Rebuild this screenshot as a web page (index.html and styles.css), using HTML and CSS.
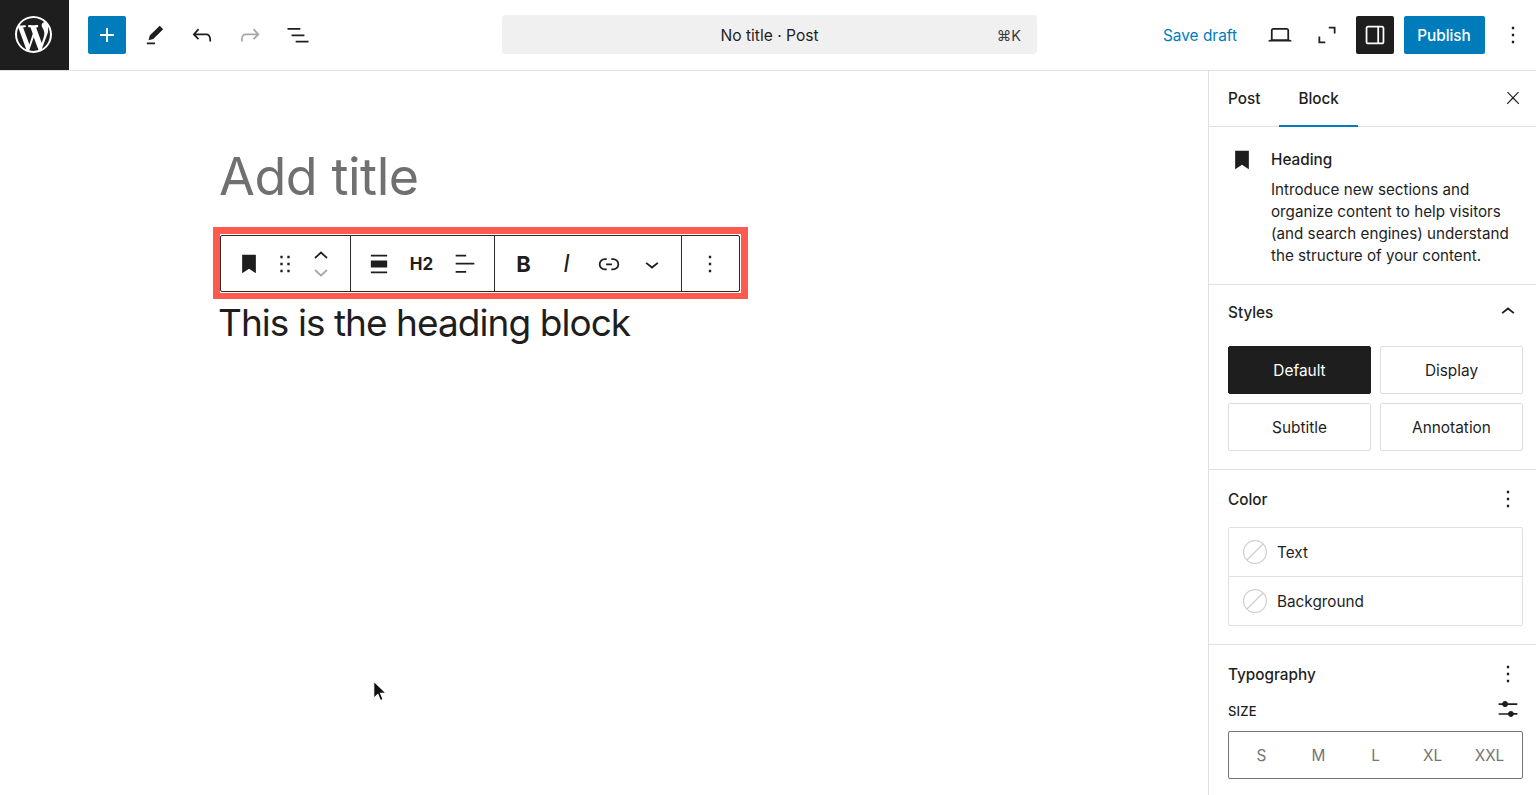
FILE: index.html
```html
<!DOCTYPE html>
<html lang="en">
<head>
<meta charset="utf-8">
<title>Edit Post</title>
<link rel="stylesheet" href="styles.css">
</head>
<body>
<header class="topbar">
  <div class="topbar-left">
    <a class="wp-logo"><svg viewBox="0 0 20 20" class="wp-svg"><path d="M20 10c0-5.51-4.49-10-10-10C4.48 0 0 4.49 0 10c0 5.52 4.48 10 10 10 5.51 0 10-4.48 10-10zM7.78 15.37L4.37 6.22c.55-.02 1.17-.08 1.17-.08.5-.06.44-1.13-.06-1.11 0 0-1.45.11-2.37.11-.18 0-.37 0-.58-.01C4.12 2.69 6.87 1.11 10 1.11c2.33 0 4.45.87 6.05 2.34-.68-.11-1.65.39-1.65 1.58 0 .74.45 1.36.9 2.1.35.61.55 1.36.55 2.46 0 1.49-1.4 5-1.4 5l-3.03-8.37c.54-.02.82-.17.82-.17.5-.05.44-1.25-.06-1.22 0 0-1.44.12-2.38.12-.87 0-2.33-.12-2.33-.12-.5-.03-.56 1.2-.06 1.22l.92.08 1.26 3.41zM17.41 10c.24-.64.74-1.87.43-4.25.7 1.29 1.05 2.71 1.05 4.25 0 3.29-1.73 6.24-4.4 7.78.97-2.59 1.94-5.2 2.92-7.78zM6.1 18.09C3.12 16.65 1.11 13.53 1.11 10c0-1.3.23-2.48.72-3.59C3.25 10.3 4.67 14.2 6.1 18.09zm4.03-6.63l2.58 6.98c-.86.29-1.76.45-2.71.45-.79 0-1.57-.11-2.29-.33.81-2.38 1.62-4.74 2.42-7.1z"/></svg></a>
    <div class="tools">
      <button class="square blue"><svg class="ic" viewBox="0 0 24 24"><path d="M18 11.2h-5.2V6h-1.6v5.2H6v1.6h5.2V18h1.6v-5.2H18z"/></svg></button>
      <button class="tool"><svg class="ic" viewBox="0 0 24 24"><path d="m19 7-3-3-8.5 8.5-1 4 4-1L19 7Zm-7 11.5H5V20h7v-1.5Z"/></svg></button>
      <button class="tool"><svg class="ic" viewBox="0 0 24 24"><path d="M18.3 11.7c-.6-.6-1.4-.9-2.3-.9H6.7l2.9-3.3-1.1-1-4.5 5L8.5 16l1-1-2.7-2.7H16c.5 0 .9.2 1.3.5 1 1 1 3.4 1 4.5v.3h1.5v-.2c0-1.5 0-4.3-1.5-5.7z"/></svg></button>
      <button class="tool dim"><svg class="ic" viewBox="0 0 24 24"><path d="M15.6 6.5l-1.1 1 2.9 3.3H8c-.9 0-1.7.3-2.3.9-1.4 1.5-1.4 4.2-1.4 5.6v.2h1.5v-.3c0-1.1 0-3.5 1-4.5.3-.3.7-.5 1.3-.5h9.2L14.5 15l1.1 1.1 4.6-4.6-4.6-5z"/></svg></button>
      <button class="tool"><svg class="ic" viewBox="0 0 24 24"><path d="M3 6h11v1.5H3V6Zm3.5 5.5h11V13h-11v-1.5ZM21 17H10v1.5h11V17Z"/></svg></button>
    </div>
  </div>
  <div class="command"><span class="command-title">No title · Post</span><span class="shortcut">⌘K</span></div>
  <div class="topbar-right">
    <a class="save">Save draft</a>
    <button class="tool laptop"><svg class="ic" viewBox="0 0 24 24"><path d="M20.5 16h-.7V8c0-1.1-.9-2-2-2H6.2c-1.1 0-2 .9-2 2v8h-.7c-.8 0-1.5.7-1.5 1.5h20c0-.8-.7-1.5-1.5-1.5zM5.7 8c0-.3.2-.5.5-.5h11.6c.3 0 .5.2.5.5v7.6H5.7V8z"/></svg></button>
    <button class="tool"><svg class="ic" viewBox="0 0 24 24"><path d="M13.5 5H19.3v5.8h-1.5V6.5h-4.3V5ZM4.7 13.2h1.5v4.3h4.3V19H4.7v-5.8Z"/></svg></button>
    <button class="square dark"><svg class="ic" viewBox="0 0 24 24"><path d="M18 4H6c-1.1 0-2 .9-2 2v12c0 1.1.9 2 2 2h12c1.1 0 2-.9 2-2V6c0-1.1-.9-2-2-2zm-4 14.5H6c-.3 0-.5-.2-.5-.5V6c0-.3.2-.5.5-.5h8v13zm4.5-.5c0 .3-.2.5-.5.5h-2.5v-13H18c.3 0 .5.2.5.5v12z"/></svg></button>
    <button class="publish">Publish</button>
    <button class="tool more"><svg class="ic" viewBox="0 0 24 24"><path d="M13 19h-2v-2h2v2zm0-6h-2v-2h2v2zm0-6h-2V5h2v2z"/></svg></button>
  </div>
</header>
<div class="workspace">
  <main class="editor">
    <h1 class="post-title">Add title</h1>
    <div class="highlight">
      <div class="block-toolbar">
        <div class="group g1">
          <span class="tb"><svg class="ic" viewBox="0 0 24 24"><path d="M6.125 4h11.75v16L12 16l-5.875 4z"/></svg></span>
          <span class="tb"><svg class="ic" viewBox="0 0 24 24"><path d="M8 7h2V5H8v2zm0 6h2v-2H8v2zm0 6h2v-2H8v2zm6-14v2h2V5h-2zm0 8h2v-2h-2v2zm0 6h2v-2h-2v2z"/></svg></span>
          <span class="mover">
            <svg class="chev" viewBox="0 0 16 10"><path d="M2 8l6-5.5L14 8" /></svg>
            <svg class="chev dimline" viewBox="0 0 16 10"><path d="M2 2l6 5.5L14 2" /></svg>
          </span>
        </div>
        <div class="group g2">
          <span class="tb"><svg class="ic" viewBox="0 0 24 24"><path d="M19 5.5H5V4h14v1.5ZM19 20H5v-1.5h14V20ZM5 9h14v6H5V9Z"/></svg></span>
          <span class="tb h2">H2</span>
          <span class="tb"><svg class="ic" viewBox="0 0 24 24"><path d="M13 5.5H4V4h9v1.5Zm7 7H4V11h16v1.5Zm-7 7H4V18h9v1.5Z"/></svg></span>
        </div>
        <div class="group g3">
          <span class="tb bold">B</span>
          <span class="tb italic">I</span>
          <span class="tb tb-link"><svg class="ic" viewBox="0 0 24 24"><path d="M10 17.389H8.444A5.194 5.194 0 1 1 8.444 7H10v1.5H8.444a3.694 3.694 0 0 0 0 7.389H10v1.5ZM14 7h1.556a5.194 5.194 0 0 1 0 10.39H14v-1.5h1.556a3.694 3.694 0 0 0 0-7.39H14V7Zm-4.5 6h5v-1.5h-5V13Z"/></svg></span>
          <span class="tb"><svg class="ic" viewBox="0 0 24 24"><path d="M17.5 11.6 12 16l-5.5-4.4.9-1.2L12 14l4.5-3.6 1 1.2z"/></svg></span>
        </div>
        <div class="group g4">
          <span class="tb"><svg class="ic" viewBox="0 0 24 24"><path d="M13 19h-2v-2h2v2zm0-6h-2v-2h2v2zm0-6h-2V5h2v2z"/></svg></span>
        </div>
      </div>
    </div>
    <h2 class="heading">This is the heading block</h2>
  </main>
  <aside class="sidebar">
    <div class="tabs">
      <span class="tab">Post</span>
      <span class="tab active">Block</span>
      <button class="tool close"><svg class="ic" viewBox="0 0 24 24"><path d="M13 11.8l6.1-6.3-1-1-6.1 6.2-6.1-6.2-1 1 6.1 6.3-6.5 6.7 1 1 6.5-6.6 6.5 6.6 1-1z"/></svg></button>
    </div>
    <section class="card">
      <svg class="card-icon" viewBox="0 0 24 24"><path d="M6.125 4h11.75v16L12 16l-5.875 4z"/></svg>
      <div class="card-body">
        <div class="card-title">Heading</div>
        <p class="card-desc">Introduce new sections and organize content to help visitors (and search engines) understand the structure of your content.</p>
      </div>
    </section>
    <section class="panel styles-panel">
      <div class="panel-head"><span>Styles</span><svg class="ic" viewBox="0 0 24 24"><path d="M6.5 12.4 12 8l5.5 4.4-.9 1.2L12 10l-4.5 3.6-1.1-1.2z"/></svg></div>
      <div class="style-grid">
        <button class="style active">Default</button>
        <button class="style">Display</button>
        <button class="style">Subtitle</button>
        <button class="style">Annotation</button>
      </div>
    </section>
    <section class="panel color-panel">
      <div class="panel-head"><span>Color</span><svg class="ic" viewBox="0 0 24 24"><path d="M13 19h-2v-2h2v2zm0-6h-2v-2h2v2zm0-6h-2V5h2v2z"/></svg></div>
      <div class="color-list">
        <div class="color-row"><svg class="swatch" viewBox="0 0 24 24"><circle cx="12" cy="12" r="11.4"/><path d="M4 20 20 4"/></svg>Text</div>
        <div class="color-row"><svg class="swatch" viewBox="0 0 24 24"><circle cx="12" cy="12" r="11.4"/><path d="M4 20 20 4"/></svg>Background</div>
      </div>
    </section>
    <section class="panel type-panel">
      <div class="panel-head"><span>Typography</span><svg class="ic" viewBox="0 0 24 24"><path d="M13 19h-2v-2h2v2zm0-6h-2v-2h2v2zm0-6h-2V5h2v2z"/></svg></div>
      <div class="size-head"><span>SIZE</span><svg class="ic" viewBox="0 0 24 24"><path d="M14.5 13.8c-1.1 0-2.1.7-2.4 1.8H4V17h8.1c.3 1 1.3 1.8 2.4 1.8s2.1-.7 2.4-1.8H20v-1.5h-3.1c-.3-1-1.3-1.7-2.4-1.7zM11.9 7c-.3-1-1.3-1.8-2.4-1.8S7.4 6 7.1 7H4v1.5h3.1c.3 1 1.3 1.8 2.4 1.8s2.1-.7 2.4-1.8H20V7h-8.1z"/></svg></div>
      <div class="sizes"><span>S</span><span>M</span><span>L</span><span>XL</span><span>XXL</span></div>
    </section>
  </aside>
</div>
<svg class="cursor" viewBox="0 0 14 20"><path d="M1.5 1v15l3.6-3.4 2.3 5.4 2.4-1-2.3-5.3h5z" fill="#111" stroke="#fff" stroke-width="1"/></svg>
</body>
</html>
```
FILE: styles.css
```css
* { box-sizing: border-box; }
html, body { margin: 0; height: 795px; overflow: hidden; background: #fff; }
body { font-family: Inter, "Liberation Sans", sans-serif; color: #1e1e1e; font-size: 15.3px; position: relative; }
button { font: inherit; color: inherit; border: 0; background: none; padding: 0; display: flex; align-items: center; justify-content: center; }
.ic { width: 28px; height: 28px; fill: currentColor; display: block; flex: none; }

.topbar { height: 71px; display: flex; align-items: center; justify-content: space-between; border-bottom: 1px solid #e0e0e0; padding-bottom: 1px; position: relative; }
.topbar-left { display: flex; align-items: center; height: 100%; }
.wp-logo { width: 69px; height: 70px; margin-bottom: -1px; background: #1e1e1e; display: flex; align-items: center; justify-content: center; padding: 0 2px 2px 0; }
.wp-svg { width: 37px; height: 37px; fill: #fff; }
.tools { display: flex; align-items: center; margin-left: 19px; gap: 9.7px; }
.square { width: 38px; height: 38px; border-radius: 2px; color: #fff; }
.blue { background: #007cba; }
.dark { background: #1e1e1e; }
.tool { width: 38px; height: 38px; }
.dim { color: #a7a7a7; }
.command { position: absolute; left: 502px; top: 15px; width: 535px; height: 39px; padding-top: 1px; background: #f0f0f0; border-radius: 4px; display: flex; align-items: center; justify-content: center; font-size: 15.6px; color: #1e1e1e; }
.shortcut { position: absolute; right: 16px; font-size: 14.5px; color: #3c3c3c; }
.topbar-right { display: flex; align-items: center; height: 100%; padding-right: 4px; }
.save { color: #007cba; font-size: 15.4px; margin-right: 24px; padding-top: 2px; }
.topbar-right .tool { margin-right: 10px; }
.topbar-right .laptop { margin-right: 9px; }
.publish { width: 81px; height: 38px; margin: 0 9px 0 10px; padding: 1px 1px 0 0; background: #007cba; color: #fff; border-radius: 2px; font-size: 15.3px; font-weight: 500; }
.topbar-right .more { margin: 0; }

.workspace { display: flex; height: 724px; }
.editor { flex: 1; padding: 77px 0 0 213px; min-width: 0; }
.post-title { margin: 0 0 0 6px; font-size: 52px; line-height: 58px; font-weight: 400; color: #707070; letter-spacing: -.45px; }
.highlight { width: 535px; height: 72px; margin-top: 21px; border: 7px solid #fe5a4e; border-bottom-width: 6px; padding: 1px 1px 1px 0; background: #fff; }
.block-toolbar { display: flex; height: 100%; border: 1px solid #2a2a2a; border-radius: 2px; }
.group { display: flex; align-items: center; border-right: 1px solid #2a2a2a; height: 100%; }
.g1 { width: 130px; padding-left: 10px; }
.g2 { width: 144px; padding-left: 6px; }
.g3 { width: 187px; padding-left: 7px; }
.g4 { flex: 1; border-right: 0; justify-content: center; padding-right: 2px; }
.tb { width: 43px; height: 100%; display: flex; align-items: center; justify-content: center; }
.tb-link { margin-left: -1px; }
.g1 .tb { width: 36px; }
.mover { width: 36px; display: flex; flex-direction: column; align-items: center; gap: 8px; }
.chev { width: 16px; height: 10px; fill: none; stroke: #1e1e1e; stroke-width: 1.7; }
.dimline { stroke: #a7a7a7; }
.h2 { font-size: 17px; font-weight: 700; }
.bold { font-size: 22px; font-weight: 700; }
.italic { font-size: 24px; font-style: italic; font-weight: 400; }
.heading { margin: -1px 0 0 5px; font-size: 37px; line-height: 50px; font-weight: 400; letter-spacing: -.95px; color: #1e1e1e; }

.sidebar { width: 328px; border-left: 1px solid #e0e0e0; flex: none; }
.tabs { height: 56px; display: flex; align-items: flex-start; padding-left: 19px; border-bottom: 1px solid #e0e0e0; position: relative; font-weight: 500; }
.tab { display: flex; align-items: center; height: 55px; }
.tab.active { margin-left: 19px; padding: 0 19px 1px; box-shadow: inset 0 -2px 0 #007cba; height: 56px; }
.close { position: absolute; right: 4px; top: 8px; }
.close .ic { width: 20px; height: 20px; }
.card { display: flex; padding: 20px 15px 0 19px; height: 158px; border-bottom: 1px solid #e0e0e0; }
.card-icon { width: 28px; height: 28px; fill: #1e1e1e; flex: none; margin: -1px 15px 0 0; }
.card-title { font-weight: 500; line-height: 26px; }
.card-desc { margin: 6px 0 0; font-size: 15.2px; line-height: 22px; }
.panel { padding: 0 13px 0 19px; border-bottom: 1px solid #e0e0e0; }
.panel-head { display: flex; align-items: center; justify-content: space-between; font-weight: 500; }
.panel-head .ic { margin-right: 1.5px; }
.styles-panel { height: 185px; padding-top: 13px; }
.style-grid { margin-top: 20px; display: grid; grid-template-columns: 143px 143px; gap: 9px 9px; }
.style { height: 48px; border: 1px solid #ddd; border-radius: 2px; font-size: 15.4px; }
.style.active { background: #1e1e1e; color: #fff; border-color: #1e1e1e; }
.color-panel { height: 175px; padding-top: 15px; }
.color-list { margin-top: 14px; border: 1px solid #e0e0e0; border-radius: 2px; }
.color-row { height: 48px; display: flex; align-items: center; padding-left: 14px; gap: 10px; }
.color-row + .color-row { border-top: 1px solid #e0e0e0; height: 49px; }
.swatch { width: 24px; height: 24px; fill: none; stroke: #cfcfcf; stroke-width: 1.2; }
.type-panel { border-bottom: 0; padding-top: 15px; }
.size-head { margin-top: 10px; display: flex; align-items: center; justify-content: space-between; font-size: 13px; font-weight: 500; height: 26px; letter-spacing: .2px; }
.size-head .ic { margin: -4px 1px 0 0; }
.sizes { margin-top: 7px; height: 48px; border: 1px solid #757575; border-radius: 2px; display: flex; align-items: center; padding: 0 4px; color: #757575; }
.sizes span { flex: 1; text-align: center; }
.cursor { position: absolute; left: 372px; top: 680px; width: 16px; height: 23px; }
```
